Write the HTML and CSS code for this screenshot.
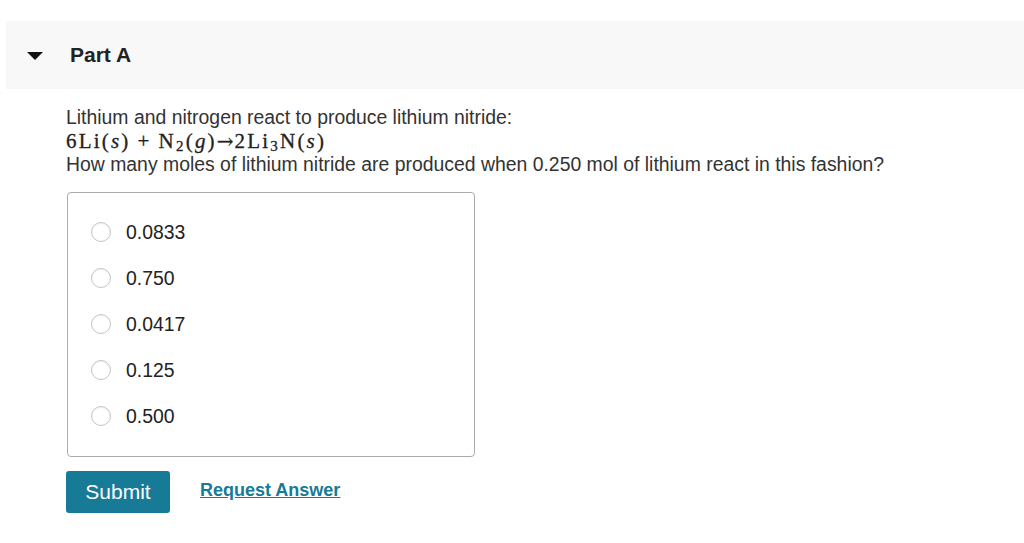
FILE: index.html
```html
<!DOCTYPE html>
<html>
<head>
<meta charset="utf-8">
<link rel="stylesheet" href="styles.css">
</head>
<body>
<div class="page">
  <div class="part-header">
    <svg class="caret" width="16" height="8" viewBox="0 0 16 8"><polygon points="0,0 16,0 8,8" fill="#111"/></svg>
    <span class="part-title">Part A</span>
  </div>
  <div class="content">
    <div class="question">
      <div class="line">Lithium and nitrogen react to produce lithium nitride:</div>
      <div class="math">6Li(<i>s</i>)<span class="op">+</span>N<sub>2</sub>(<i>g</i>)<span class="arrow">→</span>2Li<sub>3</sub>N(<i>s</i>)</div>
      <div class="line">How many moles of lithium nitride are produced when 0.250 mol of lithium react in this fashion?</div>
    </div>
    <div class="options">
      <label class="option"><span class="radio"></span><span>0.0833</span></label>
      <label class="option"><span class="radio"></span><span>0.750</span></label>
      <label class="option"><span class="radio"></span><span>0.0417</span></label>
      <label class="option"><span class="radio"></span><span>0.125</span></label>
      <label class="option"><span class="radio"></span><span>0.500</span></label>
    </div>
    <div class="actions">
      <button class="submit">Submit</button>
      <a class="request" href="#">Request Answer</a>
    </div>
  </div>
</div>
</body>
</html>
```

FILE: styles.css
```css
html, body {
  margin: 0;
  padding: 0;
  background: #fff;
}
body {
  font-family: "Liberation Sans", Arial, sans-serif;
  color: #222;
}
.page {
  padding: 21px 0 0 6px;
}
.part-header {
  display: flex;
  align-items: center;
  height: 68px;
  background: #f8f8f8;
  padding-left: 21px;
}
.caret {
  display: block;
  margin-top: 1px;
}
.part-title {
  margin-left: 27px;
  font-size: 21px;
  font-weight: bold;
  color: #222;
}
.content {
  padding: 17px 0 0 60px;
}
.question {
  font-size: 19.4px;
  line-height: 23px;
  color: #333;
}
.line {
  height: 23px;
}
.math {
  height: 24px;
  font-family: "Liberation Serif", "Times New Roman", serif;
  font-size: 21px;
  line-height: 24px;
  letter-spacing: 2.2px;
  color: #222;
  -webkit-text-stroke: 0.3px #222;
}
.math sub {
  font-size: 15px;
  line-height: 0;
  vertical-align: -3px;
}
.math .op {
  margin: 0 7px;
}
.math .arrow {
  font-family: "DejaVu Serif", serif;
  font-size: 20px;
  letter-spacing: 0;
  margin-right: 1px;
}
.options {
  margin-top: 16px;
  margin-left: 1px;
  width: 406px;
  height: 247px;
  border: 1px solid #ababab;
  border-radius: 4px;
  padding-top: 16px;
}
.option {
  display: flex;
  align-items: center;
  height: 46px;
  padding-left: 23px;
  font-size: 19.4px;
  color: #222;
}
.radio {
  width: 18px;
  height: 18px;
  border: 1px solid #c4c4c4;
  border-radius: 50%;
  background: #fff;
  margin-right: 15px;
  box-shadow: inset 0 1px 1px rgba(0,0,0,0.06);
}
.actions {
  display: flex;
  align-items: center;
  margin-top: 14px;
}
.submit {
  width: 104px;
  height: 42px;
  background: #177a96;
  color: #fff;
  border: none;
  border-radius: 3px;
  font-family: "Liberation Sans", Arial, sans-serif;
  font-size: 21px;
  padding: 0;
}
.request {
  margin-left: 30px;
  font-size: 18px;
  font-weight: bold;
  color: #177a96;
  text-decoration: underline;
  margin-top: -3px;
}
```
